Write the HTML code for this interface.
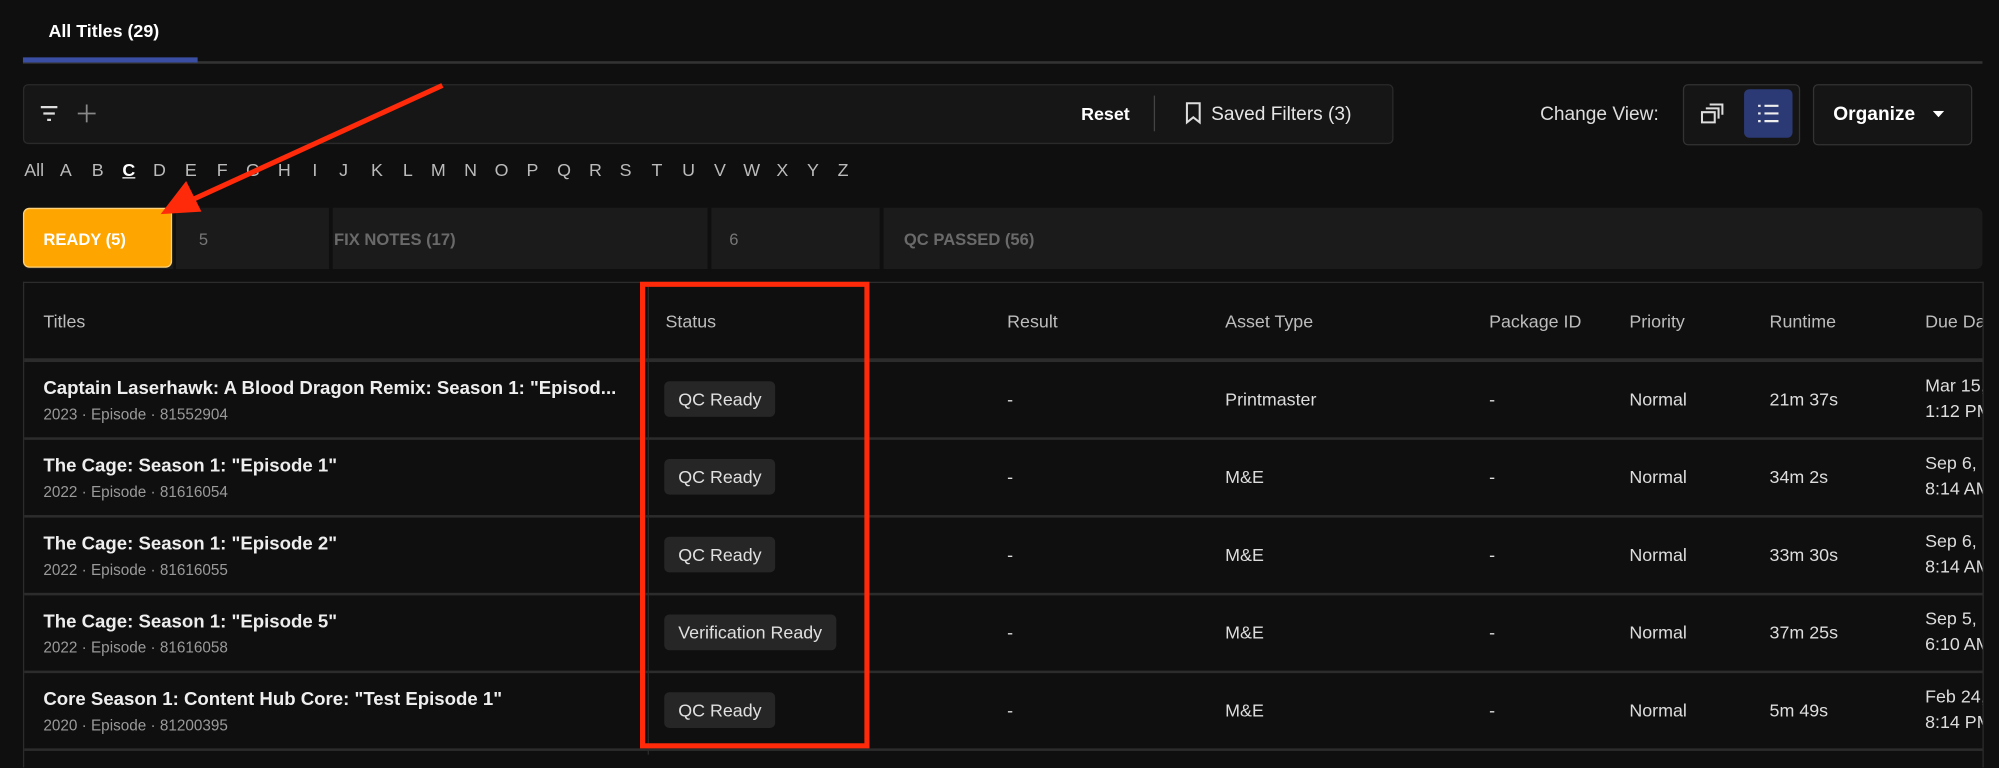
<!DOCTYPE html>
<html><head><meta charset="utf-8"><style>
html,body{margin:0;padding:0;background:#0f0f0f;width:1999px;height:757px;overflow:hidden}
#w{position:absolute;left:0;top:0;width:1568px;height:594px;transform:scale(1.2749);transform-origin:0 0;font-family:"Liberation Sans",sans-serif;color:#e6e6e6}
.a{position:absolute;white-space:nowrap}
.hd{font-size:14px;color:#bdbdbd;top:244px}
.t{font-size:14.6px;font-weight:bold;color:#eee}
.s{font-size:12px;color:#9a9a9a}
.c{font-size:14px;color:#ddd}
.pill{position:absolute;left:521px;height:28px;line-height:28px;background:#262626;border-radius:4px;padding:0 11px;font-size:14px;color:#e0e0e0}
.hl{position:absolute;left:19px;width:1536px;height:2px;background:#2c2c2c}
.lt{position:absolute;top:125px;font-size:14px;color:#bbb}
</style></head><body><div id="w">
<div class="a" style="left:38px;top:16px;font-size:14px;font-weight:bold;color:#fff">All Titles (29)</div>
<div class="a" style="left:18px;top:48px;width:1537px;height:2px;background:#333"></div>
<div class="a" style="left:18px;top:45px;width:137px;height:4px;background:#3a4fa3"></div>

<div class="a" style="left:18px;top:66px;width:1073px;height:45px;border:1px solid #2a2a2a;border-radius:4px;background:#161616"></div>
<svg class="a" style="left:31px;top:82px" width="16" height="14"><path d="M1 2h13M3 7h9M6 12h3" stroke="#ddd" stroke-width="1.8"/></svg>
<svg class="a" style="left:60px;top:81px" width="16" height="16"><path d="M8 1v14M1 8h14" stroke="#888" stroke-width="1.4"/></svg>
<div class="a" style="left:848px;top:81px;font-size:14px;font-weight:bold;color:#fff">Reset</div>
<div class="a" style="left:905px;top:75px;width:1px;height:28px;background:#444"></div>
<svg class="a" style="left:929px;top:80px" width="14" height="18"><path d="M2 1h10v15l-5-4-5 4z" fill="none" stroke="#ddd" stroke-width="1.6"/></svg>
<div class="a" style="left:950px;top:81px;font-size:15px;color:#e6e6e6">Saved Filters (3)</div>

<div class="a" style="left:1208px;top:81px;font-size:15px;color:#ddd">Change View:</div>
<div class="a" style="left:1320px;top:66px;width:90px;height:46px;border:1px solid #333;border-radius:4px;background:#151515"></div>
<svg class="a" style="left:1333px;top:80px" width="20" height="18"><path d="M2 8h10v8H2zM5 5h10v8M8 2h10v8" fill="none" stroke="#ddd" stroke-width="1.6"/></svg>
<div class="a" style="left:1368px;top:70px;width:38px;height:38px;border-radius:4px;background:#2b3a74"></div>
<svg class="a" style="left:1378px;top:81px" width="18" height="16"><path d="M1 2h2M6 2h11M1 8h2M6 8h11M1 14h2M6 14h11" stroke="#eee" stroke-width="1.7"/></svg>
<div class="a" style="left:1422px;top:66px;width:123px;height:46px;border:1px solid #333;border-radius:4px;background:#151515"></div>
<div class="a" style="left:1438px;top:81px;font-size:15px;font-weight:bold;color:#fff">Organize</div>
<svg class="a" style="left:1516px;top:87px" width="9" height="5"><path d="M0 0h9L4.5 5z" fill="#fff"/></svg>

<div class="lt" style="left:19px">All</div>
<div class="lt" style="left:47px">A</div><div class="lt" style="left:72px">B</div>
<div class="lt" style="left:96px;color:#fff;font-weight:bold;text-decoration:underline">C</div>
<div class="lt" style="left:120px">D</div><div class="lt" style="left:145px">E</div><div class="lt" style="left:170px">F</div><div class="lt" style="left:193px">G</div><div class="lt" style="left:218px">H</div><div class="lt" style="left:245px">I</div><div class="lt" style="left:266px">J</div><div class="lt" style="left:291px">K</div><div class="lt" style="left:316px">L</div><div class="lt" style="left:338px">M</div><div class="lt" style="left:364px">N</div><div class="lt" style="left:388px">O</div><div class="lt" style="left:413px">P</div><div class="lt" style="left:437px">Q</div><div class="lt" style="left:462px">R</div><div class="lt" style="left:486px">S</div><div class="lt" style="left:511px">T</div><div class="lt" style="left:535px">U</div><div class="lt" style="left:560px">V</div><div class="lt" style="left:583px">W</div><div class="lt" style="left:609px">X</div><div class="lt" style="left:633px">Y</div><div class="lt" style="left:657px">Z</div>

<div class="a" style="left:18px;top:163px;width:1537px;height:48px;border-radius:5px;background:#1b1b1b"></div>
<div class="a" style="left:18px;top:163px;width:117px;height:47px;border-radius:5px;background:#ffa500;border:1px solid #ffd27a;box-sizing:border-box"></div>
<div class="a" style="left:34px;top:180px;font-size:13px;font-weight:bold;color:#fff">READY (5)</div>
<div class="a" style="left:136px;top:163px;width:2px;height:48px;background:#0f0f0f"></div>
<div class="a" style="left:258px;top:163px;width:3px;height:48px;background:#0f0f0f"></div>
<div class="a" style="left:555px;top:163px;width:3px;height:48px;background:#0f0f0f"></div>
<div class="a" style="left:690px;top:163px;width:3px;height:48px;background:#0f0f0f"></div>
<div class="a" style="left:156px;top:180px;font-size:13px;color:#777">5</div>
<div class="a" style="left:262px;top:180px;font-size:13px;font-weight:bold;color:#6a6a6a">FIX NOTES (17)</div>
<div class="a" style="left:572px;top:180px;font-size:13px;color:#777">6</div>
<div class="a" style="left:709px;top:180px;font-size:13px;font-weight:bold;color:#6a6a6a">QC PASSED (56)</div>

<div class="a" style="left:18px;top:221px;width:1536px;height:380px;border:1px solid #2c2c2c;border-bottom:none"></div>
<div class="a" style="left:508px;top:222px;width:1px;height:370px;background:#2a2a2a"></div>
<div class="hl" style="top:281px;height:3px"></div><div class="hl" style="top:343px"></div><div class="hl" style="top:404px"></div><div class="hl" style="top:465px"></div><div class="hl" style="top:526px"></div><div class="hl" style="top:587px"></div>

<div class="a hd" style="left:34px">Titles</div><div class="a hd" style="left:522px">Status</div><div class="a hd" style="left:790px">Result</div><div class="a hd" style="left:961px">Asset Type</div><div class="a hd" style="left:1168px">Package ID</div><div class="a hd" style="left:1278px">Priority</div><div class="a hd" style="left:1388px">Runtime</div><div class="a hd" style="left:1510px;width:45px;overflow:hidden">Due Date</div>

<div class="a t" style="left:34px;top:297px">Captain Laserhawk: A Blood Dragon Remix: Season 1: "Episod...</div><div class="a s" style="left:34px;top:318px">2023 · Episode · 81552904</div>
<div class="a t" style="left:34px;top:358px">The Cage: Season 1: "Episode 1"</div><div class="a s" style="left:34px;top:379px">2022 · Episode · 81616054</div>
<div class="a t" style="left:34px;top:419px">The Cage: Season 1: "Episode 2"</div><div class="a s" style="left:34px;top:440px">2022 · Episode · 81616055</div>
<div class="a t" style="left:34px;top:480px">The Cage: Season 1: "Episode 5"</div><div class="a s" style="left:34px;top:501px">2022 · Episode · 81616058</div>
<div class="a t" style="left:34px;top:541px">Core Season 1: Content Hub Core: "Test Episode 1"</div><div class="a s" style="left:34px;top:562px">2020 · Episode · 81200395</div>

<div class="pill" style="top:299px">QC Ready</div><div class="pill" style="top:360px">QC Ready</div><div class="pill" style="top:421px">QC Ready</div><div class="pill" style="top:482px">Verification Ready</div><div class="pill" style="top:543px">QC Ready</div>

<div class="a c" style="left:790px;top:305px">-</div><div class="a c" style="left:961px;top:305px">Printmaster</div><div class="a c" style="left:1168px;top:305px">-</div><div class="a c" style="left:1278px;top:305px">Normal</div><div class="a c" style="left:1388px;top:305px">21m 37s</div>
<div class="a c" style="left:790px;top:366px">-</div><div class="a c" style="left:961px;top:366px">M&amp;E</div><div class="a c" style="left:1168px;top:366px">-</div><div class="a c" style="left:1278px;top:366px">Normal</div><div class="a c" style="left:1388px;top:366px">34m 2s</div>
<div class="a c" style="left:790px;top:427px">-</div><div class="a c" style="left:961px;top:427px">M&amp;E</div><div class="a c" style="left:1168px;top:427px">-</div><div class="a c" style="left:1278px;top:427px">Normal</div><div class="a c" style="left:1388px;top:427px">33m 30s</div>
<div class="a c" style="left:790px;top:488px">-</div><div class="a c" style="left:961px;top:488px">M&amp;E</div><div class="a c" style="left:1168px;top:488px">-</div><div class="a c" style="left:1278px;top:488px">Normal</div><div class="a c" style="left:1388px;top:488px">37m 25s</div>
<div class="a c" style="left:790px;top:549px">-</div><div class="a c" style="left:961px;top:549px">M&amp;E</div><div class="a c" style="left:1168px;top:549px">-</div><div class="a c" style="left:1278px;top:549px">Normal</div><div class="a c" style="left:1388px;top:549px">5m 49s</div>

<div class="a" style="left:1510px;top:292px;width:45px;overflow:hidden;font-size:14px;line-height:20px;color:#ddd">Mar 15,<br>1:12 PM</div>
<div class="a" style="left:1510px;top:353px;width:45px;overflow:hidden;font-size:14px;line-height:20px;color:#ddd">Sep 6,<br>8:14 AM</div>
<div class="a" style="left:1510px;top:414px;width:45px;overflow:hidden;font-size:14px;line-height:20px;color:#ddd">Sep 6,<br>8:14 AM</div>
<div class="a" style="left:1510px;top:475px;width:45px;overflow:hidden;font-size:14px;line-height:20px;color:#ddd">Sep 5,<br>6:10 AM</div>
<div class="a" style="left:1510px;top:536px;width:45px;overflow:hidden;font-size:14px;line-height:20px;color:#ddd">Feb 24,<br>8:14 PM</div>

<div class="a" style="left:502px;top:221px;width:172px;height:358px;border:4px solid #ff2a0a"></div>
<svg class="a" style="left:0;top:0" width="1568" height="594"><line x1="347" y1="67" x2="150" y2="157" stroke="#ff2a0a" stroke-width="4"/><path d="M126 168L146 142L158 166z" fill="#ff2a0a"/></svg>
</div></body></html>
